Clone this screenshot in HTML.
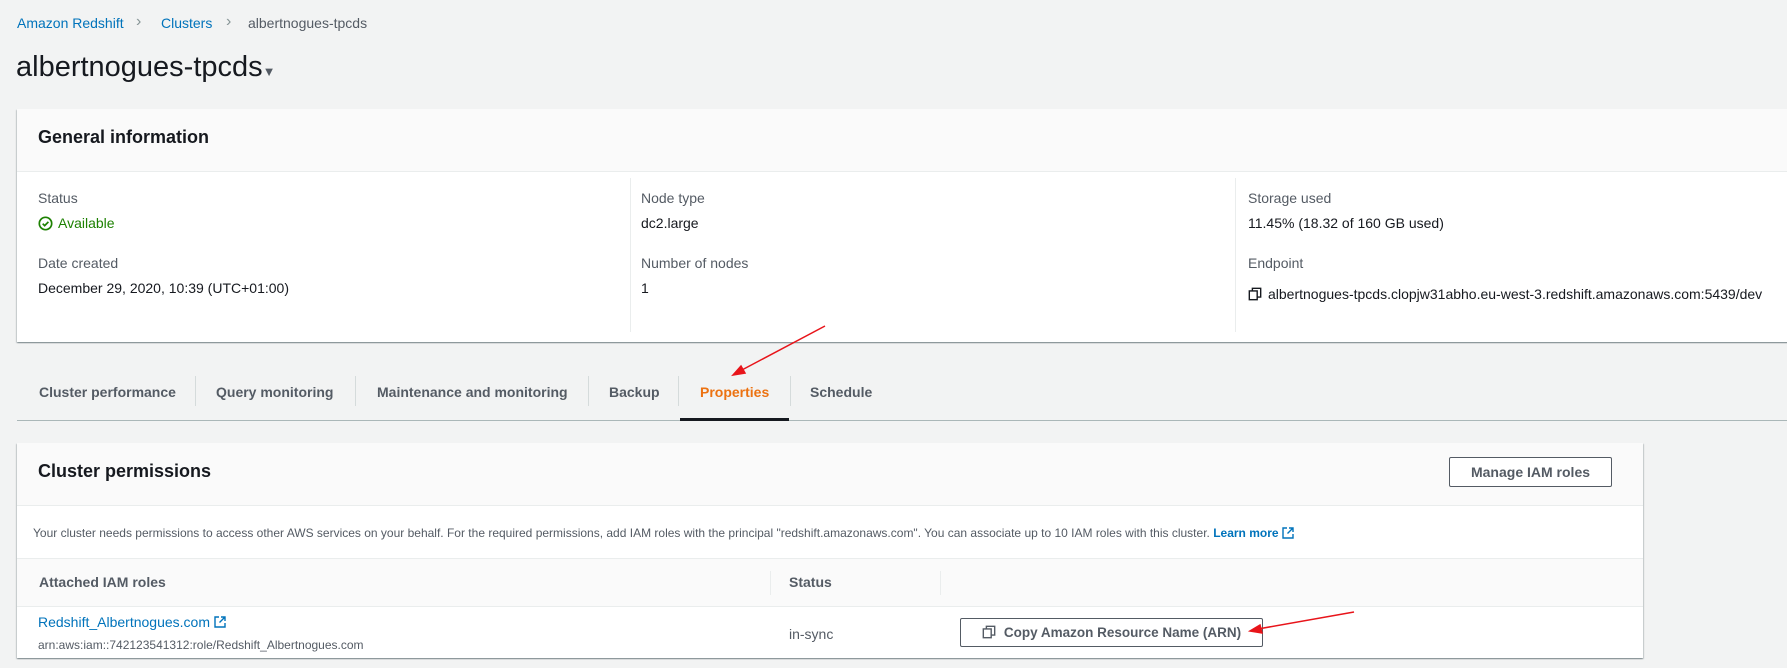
<!DOCTYPE html>
<html><head><meta charset="utf-8"><style>
*{box-sizing:border-box;margin:0;padding:0}
body{width:1787px;height:668px;background:#f2f3f3;font-family:"Liberation Sans",Arial,sans-serif;color:#16191f;position:relative;overflow:hidden;font-size:14px}
.a{position:absolute;white-space:nowrap}
.lbl{color:#545b64;font-size:14px}
.link{color:#0073bb}
.card{position:absolute;background:#fff;box-shadow:0 1px 1px 0 rgba(0,28,36,.3),1px 1px 1px 0 rgba(0,28,36,.15),-1px 1px 1px 0 rgba(0,28,36,.15)}
.hdr{position:absolute;left:0;right:0;top:0;background:#fafafa;border-bottom:1px solid #eaeded}
.tab{position:absolute;top:384px;font-weight:bold;color:#545b64;font-size:14px}
.div{position:absolute;top:376px;width:1px;height:30px;background:#d5dbdb}
.btn{position:absolute;border:1px solid #545b64;border-radius:2px;background:#fff;font-weight:bold;color:#545b64;font-size:14px;text-align:center}
</style></head><body>
<div class="a link" style="left:17px;top:15px">Amazon Redshift</div>
<div class="a" style="left:136px;top:13px;color:#879596;font-size:16px">›</div>
<div class="a link" style="left:161px;top:15px">Clusters</div>
<div class="a" style="left:226px;top:13px;color:#879596;font-size:16px">›</div>
<div class="a" style="left:248px;top:15px;color:#545b64">albertnogues-tpcds</div>
<div class="a" style="left:16px;top:51px;font-size:29px">albertnogues-tpcds<span style="font-size:13px;color:#545b64">▼</span></div>

<div class="card" style="left:17px;top:109px;width:1790px;height:233px">
 <div class="hdr" style="height:63px"></div>
 <div class="a" style="left:21px;top:18px;font-size:18px;font-weight:bold">General information</div>
 <div class="a" style="left:613px;top:69px;width:1px;height:154px;background:#eaeded"></div>
 <div class="a" style="left:1218px;top:69px;width:1px;height:154px;background:#eaeded"></div>
 <div class="a lbl" style="left:21px;top:81px">Status</div>
 <div class="a" style="left:21px;top:106px;color:#1d8102"><svg width="15" height="15" viewBox="0 0 16 16" style="vertical-align:-3px;margin-right:5px"><circle cx="8" cy="8" r="6.6" fill="none" stroke="#1d8102" stroke-width="1.8"/><path d="M5 8.2l2.1 2.1 4-4" fill="none" stroke="#1d8102" stroke-width="1.8"/></svg>Available</div>
 <div class="a lbl" style="left:21px;top:146px">Date created</div>
 <div class="a" style="left:21px;top:171px">December 29, 2020, 10:39 (UTC+01:00)</div>
 <div class="a lbl" style="left:624px;top:81px">Node type</div>
 <div class="a" style="left:624px;top:106px">dc2.large</div>
 <div class="a lbl" style="left:624px;top:146px">Number of nodes</div>
 <div class="a" style="left:624px;top:171px">1</div>
 <div class="a lbl" style="left:1231px;top:81px">Storage used</div>
 <div class="a" style="left:1231px;top:106px">11.45% (18.32 of 160 GB used)</div>
 <div class="a lbl" style="left:1231px;top:146px">Endpoint</div>
 <div class="a" style="left:1231px;top:177px"><svg width="14" height="14" viewBox="0 0 16 16" style="vertical-align:-2px;margin-right:6px"><rect x="1.5" y="4.5" width="9" height="10" fill="none" stroke="#16191f" stroke-width="1.6"/><path d="M5 4.5V1.5h9.5v10H10.5" fill="none" stroke="#16191f" stroke-width="1.6"/></svg>albertnogues-tpcds.clopjw31abho.eu-west-3.redshift.amazonaws.com:5439/dev</div>
</div>

<div class="tab" style="left:39px">Cluster performance</div>
<div class="div" style="left:195px"></div>
<div class="tab" style="left:216px">Query monitoring</div>
<div class="div" style="left:355px"></div>
<div class="tab" style="left:377px">Maintenance and monitoring</div>
<div class="div" style="left:588px"></div>
<div class="tab" style="left:609px">Backup</div>
<div class="div" style="left:678px"></div>
<div class="tab" style="left:700px;color:#ec7211">Properties</div>
<div class="div" style="left:790px"></div>
<div class="tab" style="left:810px">Schedule</div>
<div class="a" style="left:17px;top:420px;width:1770px;height:1px;background:#aab7b8"></div>
<div class="a" style="left:680px;top:418px;width:109px;height:3px;background:#16191f"></div>

<div class="card" style="left:17px;top:443px;width:1626px;height:215px">
 <div class="hdr" style="height:63px"></div>
 <div class="a" style="left:21px;top:18px;font-size:18px;font-weight:bold">Cluster permissions</div>
 <div class="btn" style="left:1432px;top:14px;width:163px;height:30px;line-height:28px">Manage IAM roles</div>
 <div class="a" style="left:16px;top:83px;font-size:12px;color:#545b64">Your cluster needs permissions to access other AWS services on your behalf. For the required permissions, add IAM roles with the principal "redshift.amazonaws.com". You can associate up to 10 IAM roles with this cluster. <b class="link">Learn more</b> <svg width="12" height="12" viewBox="0 0 12 12" style="vertical-align:-2px"><path d="M5 1H1v10h10V7M7 1h4v4M11 1L5.5 6.5" fill="none" stroke="#0073bb" stroke-width="1.4"/></svg></div>
 <div class="a" style="left:0;right:0;top:115px;height:49px;background:#fafafa;border-top:1px solid #eaeded;border-bottom:1px solid #eaeded"></div>
 <div class="a" style="left:22px;top:131px;font-weight:bold;color:#545b64">Attached IAM roles</div>
 <div class="a" style="left:753px;top:128px;width:1px;height:24px;background:#eaeded"></div>
 <div class="a" style="left:772px;top:131px;font-weight:bold;color:#545b64">Status</div>
 <div class="a" style="left:923px;top:128px;width:1px;height:24px;background:#eaeded"></div>
 <div class="a link" style="left:21px;top:171px">Redshift_Albertnogues.com <svg width="12" height="12" viewBox="0 0 12 12" style="vertical-align:-1px"><path d="M5 1H1v10h10V7M7 1h4v4M11 1L5.5 6.5" fill="none" stroke="#0073bb" stroke-width="1.4"/></svg></div>
 <div class="a" style="left:21px;top:195px;font-size:12px;color:#545b64">arn:aws:iam::742123541312:role/Redshift_Albertnogues.com</div>
 <div class="a" style="left:772px;top:183px;color:#545b64">in-sync</div>
 <div class="btn" style="left:943px;top:175px;width:303px;height:29px;line-height:27px;font-size:13.5px"><svg width="14" height="14" viewBox="0 0 16 16" style="vertical-align:-2px;margin-right:8px"><rect x="1.5" y="4.5" width="9" height="10" fill="none" stroke="#545b64" stroke-width="1.6"/><path d="M5 4.5V1.5h9.5v10H10.5" fill="none" stroke="#545b64" stroke-width="1.6"/></svg>Copy Amazon Resource Name (ARN)</div>
</div>

<svg class="a" style="left:0;top:0" width="1787" height="668">
 <g stroke="#e8141a" stroke-width="1.5" fill="#e8141a">
  <line x1="825" y1="326" x2="740" y2="371"/>
  <path d="M733 375l12-2-4-7z"/>
  <line x1="1354" y1="612" x2="1258" y2="629"/>
  <path d="M1250 631l12 2-2-8z"/>
 </g>
</svg>
</body></html>
